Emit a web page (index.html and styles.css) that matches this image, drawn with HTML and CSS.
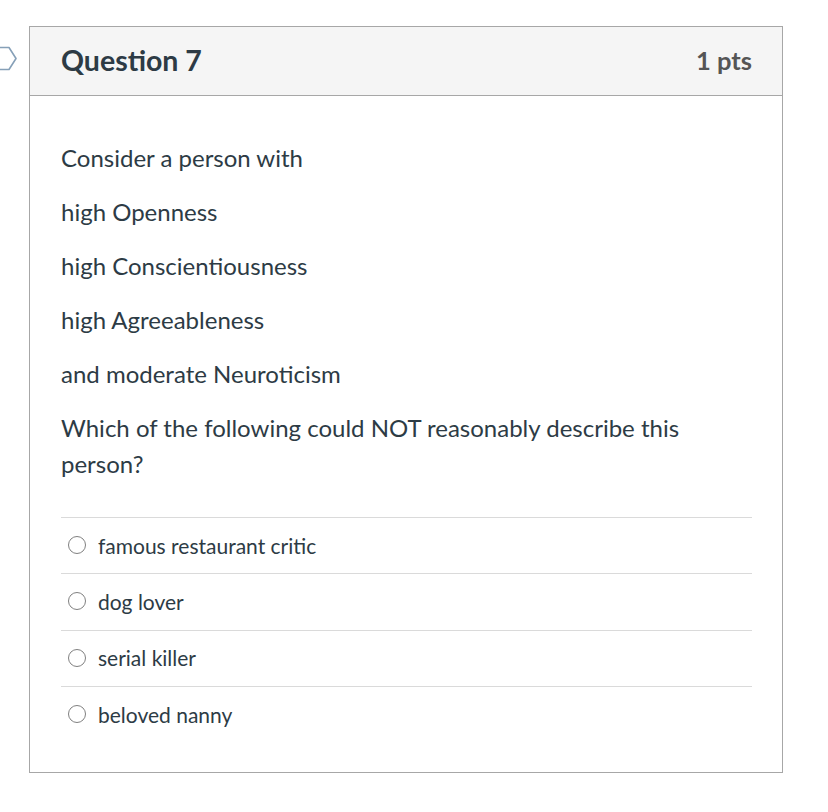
FILE: index.html
```html
<!DOCTYPE html>
<html>
<head>
<meta charset="utf-8">
<link rel="stylesheet" href="styles.css">
</head>
<body>
<div class="page">
  <div class="flag">
    <svg width="20" height="26" viewBox="0 0 20 26"><path d="M-4 1.5 H9 L16 12.5 L9 23.5 H-4" fill="none" stroke="#86a0b8" stroke-width="1.6" stroke-linejoin="round"/></svg>
  </div>
  <div class="question">
    <div class="qheader">
      <h2 class="qtitle">Question 7</h2>
      <div class="qpts">1 pts</div>
    </div>
    <div class="qbody">
      <p>Consider a person with</p>
      <p>high Openness</p>
      <p>high Conscientiousness</p>
      <p>high Agreeableness</p>
      <p>and moderate Neuroticism</p>
      <p>Which of the following could NOT reasonably describe this person?</p>
      <div class="answers">
        <label class="answer"><span class="radio"></span><span>famous restaurant critic</span></label>
        <label class="answer"><span class="radio"></span><span>dog lover</span></label>
        <label class="answer"><span class="radio"></span><span>serial killer</span></label>
        <label class="answer"><span class="radio"></span><span>beloved nanny</span></label>
      </div>
    </div>
  </div>
</div>
</body>
</html>
```
FILE: styles.css
```css
* { box-sizing: border-box; }
html, body { margin: 0; padding: 0; background: #fff; }
body { font-family: Lato, "Liberation Sans", sans-serif; color: #2d3b45; }
.page { position: relative; padding: 26px 0 0 29px; }
.flag { position: absolute; left: 0; top: 46px; width: 20px; height: 26px; }
.flag svg { display: block; }
.question { width: 754px; border: 1px solid #a7a7a7; background: #fff; }
.qheader { display: flex; justify-content: space-between; align-items: center; height: 69px; padding: 0 30px 2px 31px; background: #f5f5f5; border-bottom: 1px solid #a7a7a7; }
.qtitle { margin: 0; font-size: 28.5px; font-weight: 700; color: #2d3b45; }
.qpts { font-size: 25.5px; font-weight: 700; color: #555; }
.qbody { padding: 44px 30px 30px 31px; }
.qbody p { margin: 0 0 18px; font-size: 24px; line-height: 36px; max-width: 660px; }
.answers { margin-top: 35px; }
.answer { display: flex; align-items: center; gap: 12px; height: 56.33px; padding-left: 7px; padding-bottom: 1px; border-top: 1px solid #dadada; font-size: 21px; color: #2d3b45; }
.radio { width: 18px; height: 18px; border: 1.3px solid #808080; border-radius: 50%; flex: none; }
```
